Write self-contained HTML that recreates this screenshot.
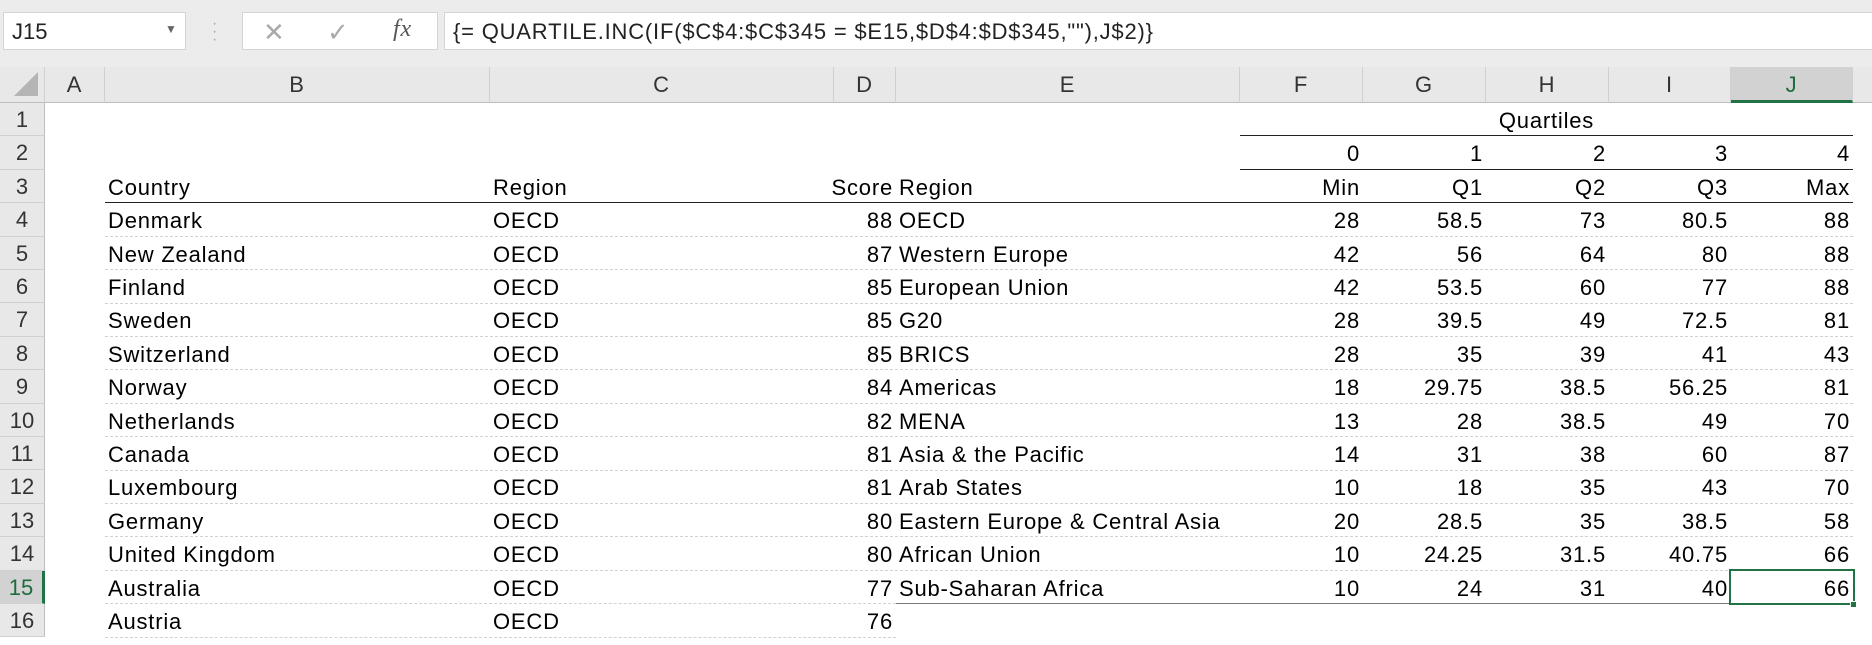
<!DOCTYPE html>
<html><head><meta charset="utf-8"><style>
*{margin:0;padding:0;box-sizing:border-box}
body{width:1872px;height:645px;overflow:hidden;background:#fff;font-family:"Liberation Sans",sans-serif;font-size:22px;letter-spacing:0.8px;color:#000;position:relative}
.top{position:absolute;left:0;top:0;width:1872px;height:67px;background:#ececec}
.box{position:absolute;background:#fff;border:1px solid #d4d4d4}
.hdr{position:absolute;top:67px;height:36px;background:#e8e8e8;border-right:1px solid #d0d0d0;border-bottom:1px solid #bdbdbd;text-align:center;line-height:36px;font-size:22px;color:#333}
.rh{position:absolute;left:0;width:45px;height:33.4px;background:#e8e8e8;border-bottom:1px solid #d0d0d0;border-right:1px solid #bdbdbd;text-align:center;line-height:34px;font-size:22px;color:#333;letter-spacing:0}
.r{position:absolute;left:0;width:1872px;height:33.4px}
.r span{position:absolute;top:0;height:33.4px;line-height:36px;padding:0 3px;white-space:nowrap}
.rt{text-align:right}
.dl{position:absolute;height:0;border-bottom:1px dashed #d2d2d2}
.sl{position:absolute;height:0;border-bottom:1px solid #222}
</style></head><body>
<div class="top"></div>
<div class="box" style="left:3px;top:12px;width:183px;height:38px;"><span style="position:absolute;left:8px;top:6px;font-size:22px;color:#222;letter-spacing:0">J15</span><span style="position:absolute;left:161px;top:9px;font-size:12px;color:#666">▼</span></div>
<div style="position:absolute;left:212px;top:20px;color:#aaa;font-size:16px;line-height:8px">·<br>·<br>·</div>
<div class="box" style="left:242px;top:12px;width:196px;height:38px;"><span style="position:absolute;left:20px;top:4px;font-size:26px;color:#aaa">✕</span><span style="position:absolute;left:84px;top:4px;font-size:26px;color:#aaa">✓</span><span style="position:absolute;left:150px;top:3px;font-size:24px;color:#555;font-family:'Liberation Serif',serif;font-style:italic">fx</span></div>
<div class="box" style="left:444px;top:12px;width:1440px;height:38px;"><span style="position:absolute;left:8px;top:6px;font-size:22px;color:#222">{= QUARTILE.INC(IF($C$4:$C$345 = $E15,$D$4:$D$345,""),J$2)}</span></div>

<div class="hdr" style="left:0;width:45px;"><div style="position:absolute;right:6px;bottom:6px;width:0;height:0;border-left:24px solid transparent;border-bottom:24px solid #b5b5b5"></div></div>
<div class="hdr" style="left:45px;width:60px">A</div>
<div class="hdr" style="left:105px;width:385px">B</div>
<div class="hdr" style="left:490px;width:344px">C</div>
<div class="hdr" style="left:834px;width:62px">D</div>
<div class="hdr" style="left:896px;width:344px">E</div>
<div class="hdr" style="left:1240px;width:123px">F</div>
<div class="hdr" style="left:1363px;width:123px">G</div>
<div class="hdr" style="left:1486px;width:123px">H</div>
<div class="hdr" style="left:1609px;width:122px">I</div>
<div class="hdr" style="left:1731px;width:122px;background:#d2d2d2;border-bottom:3px solid #217346;color:#1e6b3f">J</div>
<div class="hdr" style="left:1853px;width:19px;border-right:none"></div>

<div class="rh" style="top:103px">1</div>
<div class="rh" style="top:136.4px">2</div>
<div class="rh" style="top:169.8px">3</div>
<div class="rh" style="top:203.2px">4</div>
<div class="rh" style="top:236.6px">5</div>
<div class="rh" style="top:270px">6</div>
<div class="rh" style="top:303.4px">7</div>
<div class="rh" style="top:336.8px">8</div>
<div class="rh" style="top:370.2px">9</div>
<div class="rh" style="top:403.6px">10</div>
<div class="rh" style="top:437px">11</div>
<div class="rh" style="top:470.4px">12</div>
<div class="rh" style="top:503.8px">13</div>
<div class="rh" style="top:537.2px">14</div>
<div class="rh" style="top:570.6px;background:#d2d2d2;border-right:3px solid #217346;color:#1e6b3f">15</div>
<div class="rh" style="top:604px">16</div>

<div class="sl" style="left:1240px;width:613px;top:135px"></div>
<div class="sl" style="left:1240px;width:613px;top:169px"></div>
<div class="sl" style="left:105px;width:1748px;top:202px"></div>
<div class="dl" style="left:105px;width:1748px;top:236px"></div>
<div class="dl" style="left:105px;width:1748px;top:269px"></div>
<div class="dl" style="left:105px;width:1748px;top:303px"></div>
<div class="dl" style="left:105px;width:1748px;top:336px"></div>
<div class="dl" style="left:105px;width:1748px;top:369px"></div>
<div class="dl" style="left:105px;width:1748px;top:403px"></div>
<div class="dl" style="left:105px;width:1748px;top:436px"></div>
<div class="dl" style="left:105px;width:1748px;top:470px"></div>
<div class="dl" style="left:105px;width:1748px;top:503px"></div>
<div class="dl" style="left:105px;width:1748px;top:536px"></div>
<div class="dl" style="left:105px;width:1748px;top:570px"></div>
<div class="dl" style="left:105px;width:791px;top:603px"></div>
<div class="sl" style="left:896px;width:957px;top:603px;border-color:#777"></div>
<div class="dl" style="left:105px;width:791px;top:637px"></div>

<div class="r" style="top:103px"><span style="left:1240px;width:613px;text-align:center">Quartiles</span></div>
<div class="r" style="top:136.4px"><span class="rt" style="left:1240px;width:123px">0</span><span class="rt" style="left:1363px;width:123px">1</span><span class="rt" style="left:1486px;width:123px">2</span><span class="rt" style="left:1609px;width:122px">3</span><span class="rt" style="left:1731px;width:122px">4</span></div>
<div class="r" style="top:169.8px"><span style="left:105px">Country</span><span style="left:490px">Region</span><span class="rt" style="left:780px;width:116px">Score</span><span style="left:896px">Region</span><span class="rt" style="left:1240px;width:123px">Min</span><span class="rt" style="left:1363px;width:123px">Q1</span><span class="rt" style="left:1486px;width:123px">Q2</span><span class="rt" style="left:1609px;width:122px">Q3</span><span class="rt" style="left:1731px;width:122px">Max</span></div>

<div class="r" style="top:203.2px"><span style="left:105px">Denmark</span><span style="left:490px">OECD</span><span class="rt" style="left:834px;width:62px">88</span><span style="left:896px">OECD</span><span class="rt" style="left:1240px;width:123px">28</span><span class="rt" style="left:1363px;width:123px">58.5</span><span class="rt" style="left:1486px;width:123px">73</span><span class="rt" style="left:1609px;width:122px">80.5</span><span class="rt" style="left:1731px;width:122px">88</span></div>
<div class="r" style="top:236.6px"><span style="left:105px">New Zealand</span><span style="left:490px">OECD</span><span class="rt" style="left:834px;width:62px">87</span><span style="left:896px">Western Europe</span><span class="rt" style="left:1240px;width:123px">42</span><span class="rt" style="left:1363px;width:123px">56</span><span class="rt" style="left:1486px;width:123px">64</span><span class="rt" style="left:1609px;width:122px">80</span><span class="rt" style="left:1731px;width:122px">88</span></div>
<div class="r" style="top:270px"><span style="left:105px">Finland</span><span style="left:490px">OECD</span><span class="rt" style="left:834px;width:62px">85</span><span style="left:896px">European Union</span><span class="rt" style="left:1240px;width:123px">42</span><span class="rt" style="left:1363px;width:123px">53.5</span><span class="rt" style="left:1486px;width:123px">60</span><span class="rt" style="left:1609px;width:122px">77</span><span class="rt" style="left:1731px;width:122px">88</span></div>
<div class="r" style="top:303.4px"><span style="left:105px">Sweden</span><span style="left:490px">OECD</span><span class="rt" style="left:834px;width:62px">85</span><span style="left:896px">G20</span><span class="rt" style="left:1240px;width:123px">28</span><span class="rt" style="left:1363px;width:123px">39.5</span><span class="rt" style="left:1486px;width:123px">49</span><span class="rt" style="left:1609px;width:122px">72.5</span><span class="rt" style="left:1731px;width:122px">81</span></div>
<div class="r" style="top:336.8px"><span style="left:105px">Switzerland</span><span style="left:490px">OECD</span><span class="rt" style="left:834px;width:62px">85</span><span style="left:896px">BRICS</span><span class="rt" style="left:1240px;width:123px">28</span><span class="rt" style="left:1363px;width:123px">35</span><span class="rt" style="left:1486px;width:123px">39</span><span class="rt" style="left:1609px;width:122px">41</span><span class="rt" style="left:1731px;width:122px">43</span></div>
<div class="r" style="top:370.2px"><span style="left:105px">Norway</span><span style="left:490px">OECD</span><span class="rt" style="left:834px;width:62px">84</span><span style="left:896px">Americas</span><span class="rt" style="left:1240px;width:123px">18</span><span class="rt" style="left:1363px;width:123px">29.75</span><span class="rt" style="left:1486px;width:123px">38.5</span><span class="rt" style="left:1609px;width:122px">56.25</span><span class="rt" style="left:1731px;width:122px">81</span></div>
<div class="r" style="top:403.6px"><span style="left:105px">Netherlands</span><span style="left:490px">OECD</span><span class="rt" style="left:834px;width:62px">82</span><span style="left:896px">MENA</span><span class="rt" style="left:1240px;width:123px">13</span><span class="rt" style="left:1363px;width:123px">28</span><span class="rt" style="left:1486px;width:123px">38.5</span><span class="rt" style="left:1609px;width:122px">49</span><span class="rt" style="left:1731px;width:122px">70</span></div>
<div class="r" style="top:437px"><span style="left:105px">Canada</span><span style="left:490px">OECD</span><span class="rt" style="left:834px;width:62px">81</span><span style="left:896px">Asia &amp; the Pacific</span><span class="rt" style="left:1240px;width:123px">14</span><span class="rt" style="left:1363px;width:123px">31</span><span class="rt" style="left:1486px;width:123px">38</span><span class="rt" style="left:1609px;width:122px">60</span><span class="rt" style="left:1731px;width:122px">87</span></div>
<div class="r" style="top:470.4px"><span style="left:105px">Luxembourg</span><span style="left:490px">OECD</span><span class="rt" style="left:834px;width:62px">81</span><span style="left:896px">Arab States</span><span class="rt" style="left:1240px;width:123px">10</span><span class="rt" style="left:1363px;width:123px">18</span><span class="rt" style="left:1486px;width:123px">35</span><span class="rt" style="left:1609px;width:122px">43</span><span class="rt" style="left:1731px;width:122px">70</span></div>
<div class="r" style="top:503.8px"><span style="left:105px">Germany</span><span style="left:490px">OECD</span><span class="rt" style="left:834px;width:62px">80</span><span style="left:896px">Eastern Europe &amp; Central Asia</span><span class="rt" style="left:1240px;width:123px">20</span><span class="rt" style="left:1363px;width:123px">28.5</span><span class="rt" style="left:1486px;width:123px">35</span><span class="rt" style="left:1609px;width:122px">38.5</span><span class="rt" style="left:1731px;width:122px">58</span></div>
<div class="r" style="top:537.2px"><span style="left:105px">United Kingdom</span><span style="left:490px">OECD</span><span class="rt" style="left:834px;width:62px">80</span><span style="left:896px">African Union</span><span class="rt" style="left:1240px;width:123px">10</span><span class="rt" style="left:1363px;width:123px">24.25</span><span class="rt" style="left:1486px;width:123px">31.5</span><span class="rt" style="left:1609px;width:122px">40.75</span><span class="rt" style="left:1731px;width:122px">66</span></div>
<div class="r" style="top:570.6px"><span style="left:105px">Australia</span><span style="left:490px">OECD</span><span class="rt" style="left:834px;width:62px">77</span><span style="left:896px">Sub-Saharan Africa</span><span class="rt" style="left:1240px;width:123px">10</span><span class="rt" style="left:1363px;width:123px">24</span><span class="rt" style="left:1486px;width:123px">31</span><span class="rt" style="left:1609px;width:122px">40</span><span class="rt" style="left:1731px;width:122px">66</span></div>
<div class="r" style="top:604px"><span style="left:105px">Austria</span><span style="left:490px">OECD</span><span class="rt" style="left:834px;width:62px">76</span></div>

<div style="position:absolute;left:1729px;top:569px;width:126px;height:36px;border:2px solid #217346"></div>
<div style="position:absolute;left:1850px;top:601px;width:7px;height:7px;background:#217346;border:1px solid #fff"></div>
</body></html>
